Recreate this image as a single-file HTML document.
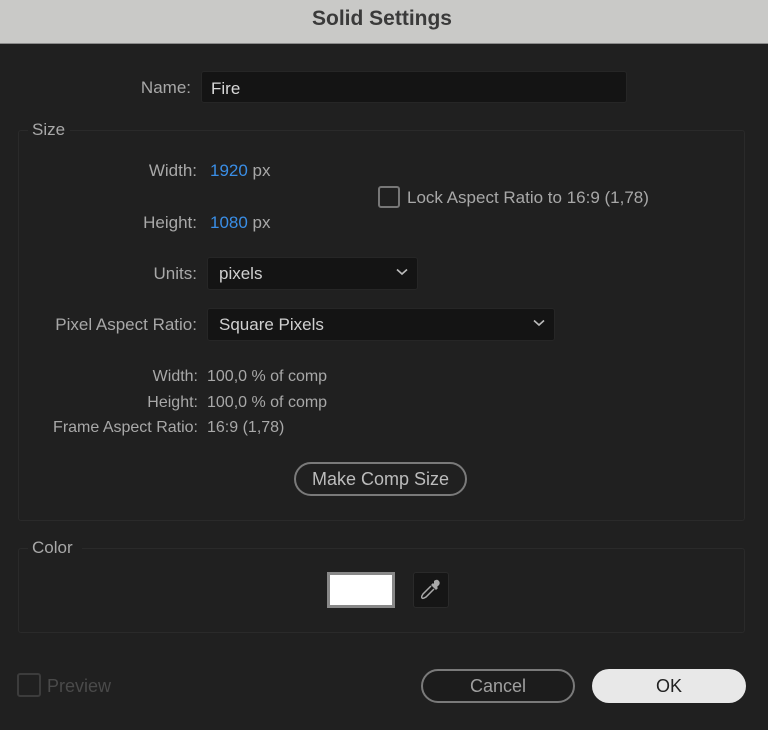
<!DOCTYPE html>
<html><head><meta charset="utf-8"><style>
*{margin:0;padding:0;box-sizing:border-box}
body{width:768px;height:730px;background:#202020;font-family:"Liberation Sans",sans-serif;position:relative;overflow:hidden;color:#a8a8a8}
.t{position:absolute;font-size:17px;white-space:nowrap;letter-spacing:0;line-height:20px}
.r{text-align:right}
.s{font-size:16px}
.box{position:absolute;border:1px solid #2a2a2a;border-radius:3px}
.in{position:absolute;background:#141414;border:1px solid #262626;border-radius:3px}
.blue{color:#3a8ee6}
.v{color:#c8c8c8}
</style></head><body>
<div style="position:absolute;left:0;top:0;width:768px;height:44px;background:#c9c9c7;border-bottom:1px solid #8a8a8a"></div>
<div class="t" style="left:0;width:764px;top:9px;text-align:center;font-size:21px;font-weight:bold;color:#3a3a3a">Solid Settings</div>

<div class="t r" style="right:577px;top:78px">Name:</div>
<div class="in" style="left:201px;top:71px;width:426px;height:32px"></div>
<div class="t v" style="left:211px;top:79px;color:#d8d8d8">Fire</div>

<div class="box" style="left:18px;top:130px;width:727px;height:391px"></div>
<div style="position:absolute;left:28px;top:120px;width:42px;height:20px;background:#202020"></div>
<div class="t" style="left:32px;top:120px">Size</div>

<div class="t r" style="right:571px;top:161px">Width:</div>
<div class="t" style="left:210px;top:161px"><span class="blue">1920</span> px</div>
<div class="t r" style="right:571px;top:213px">Height:</div>
<div class="t" style="left:210px;top:213px"><span class="blue">1080</span> px</div>

<div style="position:absolute;left:378px;top:186px;width:22px;height:22px;border:2px solid #777;border-radius:3px"></div>
<div class="t" style="left:407px;top:188px">Lock Aspect Ratio to 16:9 (1,78)</div>

<div class="t r" style="right:571px;top:264px">Units:</div>
<div class="in" style="left:207px;top:257px;width:211px;height:33px"></div>
<div class="t v" style="left:219px;top:264px;color:#d0d0d0">pixels</div>
<svg style="position:absolute;left:396px;top:268px" width="12" height="8"><path d="M1 1.5 L6 6 L11 1.5" stroke="#bbb" stroke-width="1.6" fill="none"/></svg>

<div class="t r" style="right:571px;top:315px">Pixel Aspect Ratio:</div>
<div class="in" style="left:207px;top:308px;width:348px;height:33px"></div>
<div class="t v" style="left:219px;top:315px;color:#d0d0d0">Square Pixels</div>
<svg style="position:absolute;left:533px;top:319px" width="12" height="8"><path d="M1 1.5 L6 6 L11 1.5" stroke="#bbb" stroke-width="1.6" fill="none"/></svg>

<div class="t r s" style="right:570px;top:367px">Width:</div>
<div class="t s" style="left:207px;top:367px">100,0 % of comp</div>
<div class="t r s" style="right:570px;top:393px">Height:</div>
<div class="t s" style="left:207px;top:393px">100,0 % of comp</div>
<div class="t r s" style="right:570px;top:418px">Frame Aspect Ratio:</div>
<div class="t s" style="left:207px;top:418px">16:9 (1,78)</div>

<div style="position:absolute;left:294px;top:462px;width:173px;height:34px;border:2px solid #7a7a7a;border-radius:17px"></div>
<div class="t" style="left:294px;width:173px;top:469px;text-align:center;color:#bcbcbc;font-size:18px">Make Comp Size</div>

<div class="box" style="left:18px;top:548px;width:727px;height:85px"></div>
<div style="position:absolute;left:28px;top:538px;width:54px;height:20px;background:#202020"></div>
<div class="t" style="left:32px;top:538px">Color</div>
<div style="position:absolute;left:327px;top:572px;width:68px;height:36px;background:#fff;border:3px solid #888"></div>
<div style="position:absolute;left:413px;top:572px;width:36px;height:36px;background:#161616;border:1px solid #2a2a2a;border-radius:3px"></div>
<svg style="position:absolute;left:418px;top:577px" width="26" height="26" viewBox="0 0 26 26"><path d="M16 4 a3 3 0 0 1 5 4 l-2 2 l1 1 l-2 2 l-5 -5 l2 -2 l1 1 z" fill="#aaa"/><path d="M13 9 L5 17 Q3 20 4 21 Q5 22 8 20 L16 12" stroke="#aaa" stroke-width="1.5" fill="none"/></svg>

<div style="position:absolute;left:17px;top:673px;width:24px;height:24px;border:2px solid #3c3c3c;border-radius:3px"></div>
<div class="t" style="left:47px;top:676px;color:#4a4a4a;font-size:18px">Preview</div>

<div style="position:absolute;left:421px;top:669px;width:154px;height:34px;border:2px solid #7a7a7a;border-radius:17px;background:#1c1c1c"></div>
<div class="t" style="left:421px;width:154px;top:676px;text-align:center;color:#a0a0a0;font-size:18px">Cancel</div>
<div style="position:absolute;left:592px;top:669px;width:154px;height:34px;border-radius:17px;background:#e8e8e8"></div>
<div class="t" style="left:592px;width:154px;top:676px;text-align:center;color:#222;font-size:18px">OK</div>
</body></html>
